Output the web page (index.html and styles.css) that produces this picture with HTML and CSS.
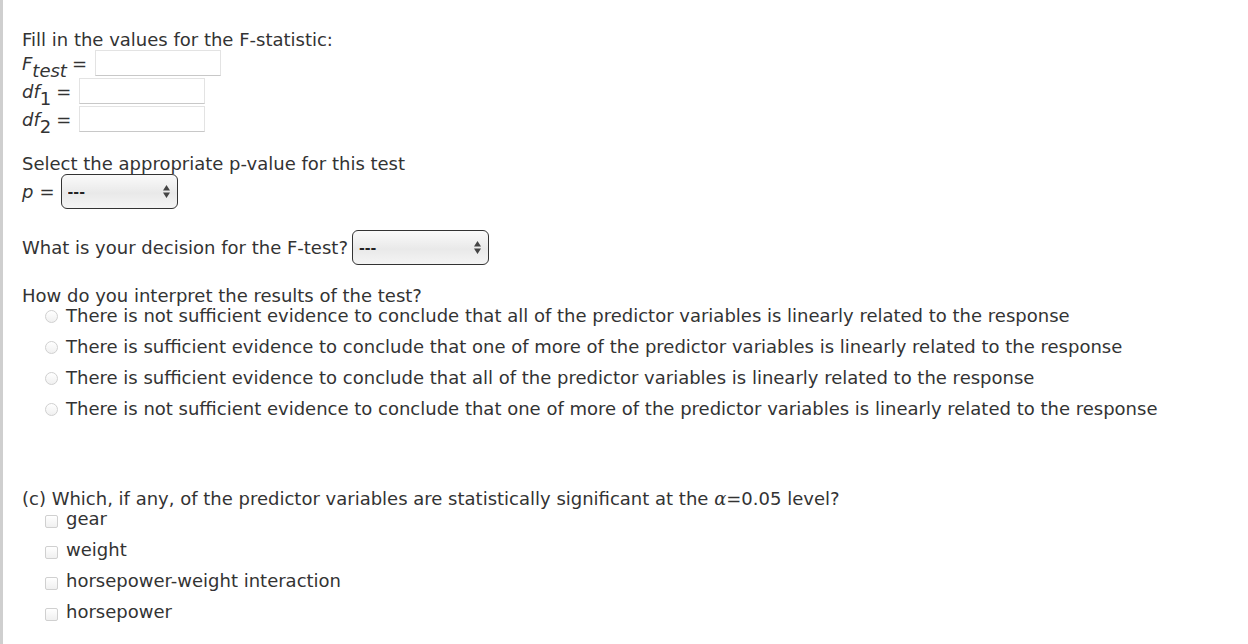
FILE: index.html
```html
<!DOCTYPE html>
<html>
<head>
<meta charset="utf-8">
<link rel="stylesheet" href="styles.css">
</head>
<body>
<div class="page">
  <div class="section fstat">
    <div class="line">Fill in the values for the F-statistic:</div>
    <div class="row">
      <span class="math"><i>F</i><sub><i>test</i></sub></span><span class="eq">=</span><input class="box box-f" type="text">
    </div>
    <div class="row">
      <span class="math"><i>df</i><sub>1</sub></span><span class="eq">=</span><input class="box" type="text">
    </div>
    <div class="row">
      <span class="math"><i>df</i><sub>2</sub></span><span class="eq">=</span><input class="box" type="text">
    </div>
  </div>

  <div class="section pval">
    <div class="line">Select the appropriate p-value for this test</div>
    <div class="row srow">
      <span class="math"><i>p</i></span><span class="eq eq-p">=</span>
      <span class="sel sel-p"><select><option>---</option></select><svg class="arrows" width="7" height="13" viewBox="0 0 7 13"><path d="M3.5 0 L7 5.5 L0 5.5 Z M0 7.5 L7 7.5 L3.5 13 Z" fill="#444"/></svg></span>
    </div>
  </div>

  <div class="section decision">
    <span class="line-inline">What is your decision for the F-test?</span><span class="sel sel-d"><select><option>---</option></select><svg class="arrows" width="7" height="13" viewBox="0 0 7 13"><path d="M3.5 0 L7 5.5 L0 5.5 Z M0 7.5 L7 7.5 L3.5 13 Z" fill="#444"/></svg></span>
  </div>

  <div class="section interp">
    <div class="line">How do you interpret the results of the test?</div>
    <ul class="opts">
      <li><span class="radio"></span>There is not sufficient evidence to conclude that all of the predictor variables is linearly related to the response</li>
      <li><span class="radio"></span>There is sufficient evidence to conclude that one of more of the predictor variables is linearly related to the response</li>
      <li><span class="radio"></span>There is sufficient evidence to conclude that all of the predictor variables is linearly related to the response</li>
      <li><span class="radio"></span>There is not sufficient evidence to conclude that one of more of the predictor variables is linearly related to the response</li>
    </ul>
  </div>

  <div class="section partc">
    <div class="line">(c) Which, if any, of the predictor variables are statistically significant at the <i class="alpha">α</i>=0.05 level?</div>
    <ul class="opts">
      <li><span class="check"></span>gear</li>
      <li><span class="check"></span>weight</li>
      <li><span class="check"></span>horsepower-weight interaction</li>
      <li><span class="check"></span>horsepower</li>
    </ul>
  </div>
</div>
</body>
</html>
```

FILE: styles.css
```css
html, body {
  margin: 0;
  padding: 0;
  background: #fff;
}
body {
  font-family: "DejaVu Sans", Verdana, sans-serif;
  font-size: 18px;
  color: #333;
}
.page {
  border-left: 3px solid #cfcfcf;
  min-height: 644px;
  box-sizing: border-box;
  padding: 30px 0 0 19px;
}
.line {
  line-height: 19px;
  white-space: nowrap;
}
.row {
  display: flex;
  align-items: center;
  height: 28px;
}
.math {
  display: inline-block;
  line-height: 19px;
}
.math i {
  font-style: italic;
}
.math sub {
  font-size: 18px;
  vertical-align: -7px;
  line-height: 0;
}
.eq {
  margin: 0 8px 0 5px;
  line-height: 19px;
}
.eq-p {
  margin: 0 6px 0 6px;
}
.box {
  box-sizing: border-box;
  width: 126px;
  height: 26px;
  border: 1px solid #e3e3e3;
  border-bottom-color: #c8c8c8;
  background: #fff;
  margin: 0;
  padding: 0 4px;
  font: inherit;
}
.pval {
  margin-top: 21px;
}
.srow {
  height: 37px;
}
.sel {
  position: relative;
  display: inline-block;
}
.sel select {
  -webkit-appearance: none;
  appearance: none;
  box-sizing: border-box;
  height: 35px;
  border: 1.5px solid #333;
  border-radius: 6px;
  background: linear-gradient(#fafafa, #e9e9e9 55%, #f4f4f4);
  font-family: "DejaVu Sans", Verdana, sans-serif;
  font-size: 14px;
  font-weight: bold;
  color: #222;
  padding: 0 0 0 6px;
  margin: 0;
  display: block;
}
.sel-p select {
  width: 117px;
}
.sel-d {
  margin-left: 4px;
}
.sel-d select {
  width: 137px;
}
.arrows {
  position: absolute;
  right: 8px;
  top: 11px;
  pointer-events: none;
}
.decision {
  margin-top: 20px;
  display: flex;
  align-items: center;
  line-height: 19px;
}
.interp {
  margin-top: 21px;
}
.opts {
  list-style: none;
  margin: 0;
  padding: 0 0 0 23px;
}
.opts li {
  display: flex;
  align-items: center;
  height: 20px;
  line-height: 20px;
  margin-top: 11px;
  white-space: nowrap;
}
.opts li:first-child {
  margin-top: 1px;
}
.radio {
  width: 11px;
  height: 11px;
  border: 1px solid #d0d0d0;
  border-radius: 50%;
  background: linear-gradient(#fff, #f0f0f0);
  margin-right: 8px;
  flex: none;
}
.check {
  width: 11px;
  height: 11px;
  border: 1px solid #d0d0d0;
  border-radius: 2px;
  background: linear-gradient(#fff, #f0f0f0);
  margin-right: 8px;
  flex: none;
  position: relative;
  top: 2px;
}
.partc {
  margin-top: 70px;
}
.alpha {
  font-family: "DejaVu Serif", serif;
  font-style: italic;
}
```
